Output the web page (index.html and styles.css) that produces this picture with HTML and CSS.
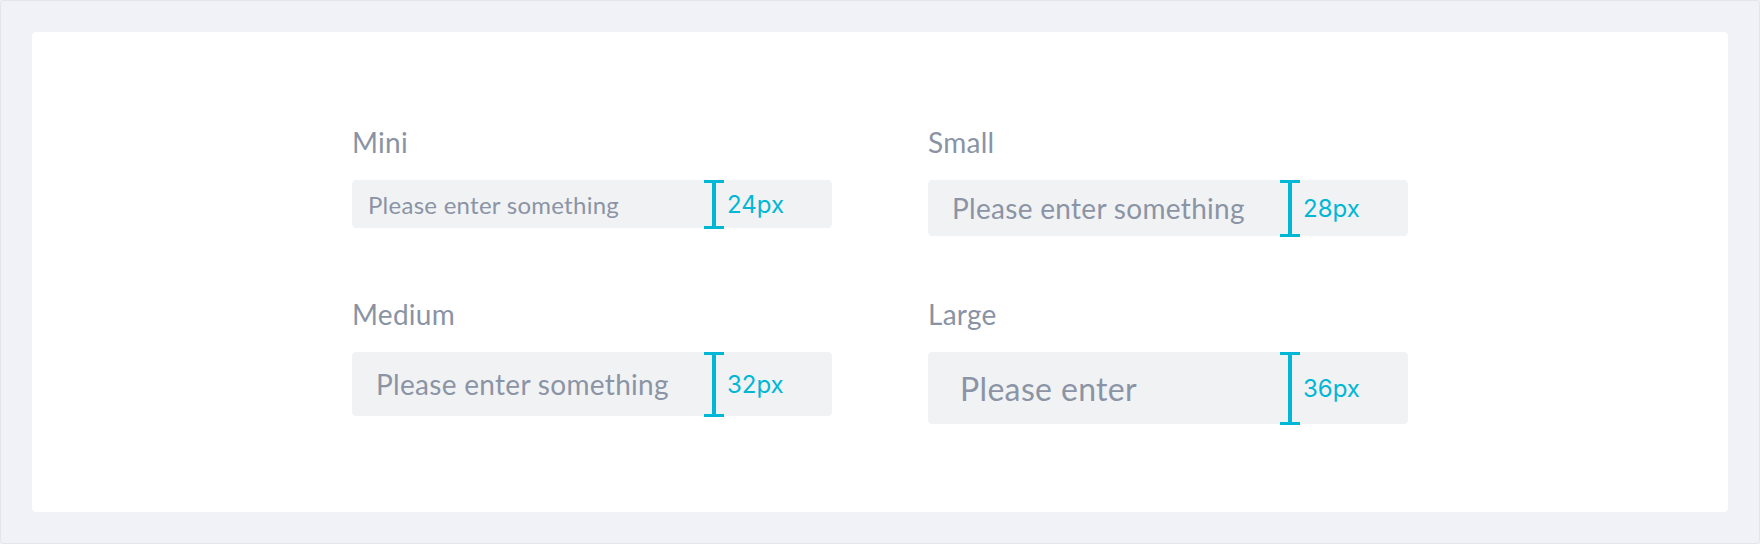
FILE: index.html
```html
<!DOCTYPE html>
<html lang="en">
<head>
<meta charset="utf-8">
<title>Input sizes</title>
<link rel="stylesheet" href="styles.css">
</head>
<body>
<div class="frame">
  <div class="card">
    <div class="grid">
      <div class="field">
        <div class="label">Mini</div>
        <div class="input input-mini">
          <span class="placeholder">Please enter something</span>
          <span class="beam"></span>
          <span class="measure">24px</span>
        </div>
      </div>
      <div class="field">
        <div class="label">Small</div>
        <div class="input input-small">
          <span class="placeholder">Please enter something</span>
          <span class="beam"></span>
          <span class="measure">28px</span>
        </div>
      </div>
      <div class="field">
        <div class="label">Medium</div>
        <div class="input input-medium">
          <span class="placeholder">Please enter something</span>
          <span class="beam"></span>
          <span class="measure">32px</span>
        </div>
      </div>
      <div class="field">
        <div class="label">Large</div>
        <div class="input input-large">
          <span class="placeholder">Please enter</span>
          <span class="beam"></span>
          <span class="measure">36px</span>
        </div>
      </div>
    </div>
  </div>
</div>
</body>
</html>
```

FILE: styles.css
```css
html, body {
  margin: 0;
  padding: 0;
  background: #f0f2f7;
}

.frame {
  box-sizing: border-box;
  width: 1760px;
  height: 544px;
  padding: 31px;
  background: #f0f2f7;
  border: 1px solid #e2e5ec;
  border-radius: 4px;
}

.card {
  box-sizing: border-box;
  height: 480px;
  background: #ffffff;
  border-radius: 4px;
  padding: 92px 0 88px;
}

.grid {
  display: grid;
  grid-template-columns: 480px 480px;
  column-gap: 96px;
  row-gap: 60px;
  justify-content: center;
  align-items: start;
}

.field {
  display: flex;
  flex-direction: column;
}

.label {
  font-family: Lato, "Open Sans", sans-serif;
  font-size: 28px;
  line-height: 36px;
  letter-spacing: 0.01em;
  color: #8a93a4;
  margin-bottom: 20px;
}

.input {
  box-sizing: border-box;
  display: flex;
  align-items: center;
  background: #f1f2f4;
  border-radius: 4px;
  width: 480px;
  font-family: Lato, "Open Sans", sans-serif;
  color: #8b94a5;
}

.input-mini { height: 48px; padding-left: 16px; font-size: 24px; }
.input-small { height: 56px; padding-left: 24px; font-size: 28px; }
.input-medium { height: 64px; padding-left: 24px; font-size: 28px; }
.input-large { height: 72px; padding-left: 32px; font-size: 32px; }

.placeholder {
  white-space: nowrap;
  letter-spacing: 0.011em;
}

.input-mini .placeholder { width: 336px; }
.input-small .placeholder,
.input-medium .placeholder { width: 328px; }
.input-large .placeholder { width: 320px; }

.beam {
  align-self: stretch;
  width: 20px;
  flex: 0 0 20px;
  border-top: 3px solid #00b7d6;
  border-bottom: 3px solid #00b7d6;
  box-sizing: border-box;
  margin-bottom: -1px;
}

.beam::before {
  content: "";
  display: block;
  margin: 0 auto;
  width: 4px;
  height: 100%;
  background: #00b7d6;
}

.measure {
  margin-left: 3px;
  font-family: Inter, Roboto, sans-serif;
  font-size: 24px;
  color: #00b7d6;
}
```
